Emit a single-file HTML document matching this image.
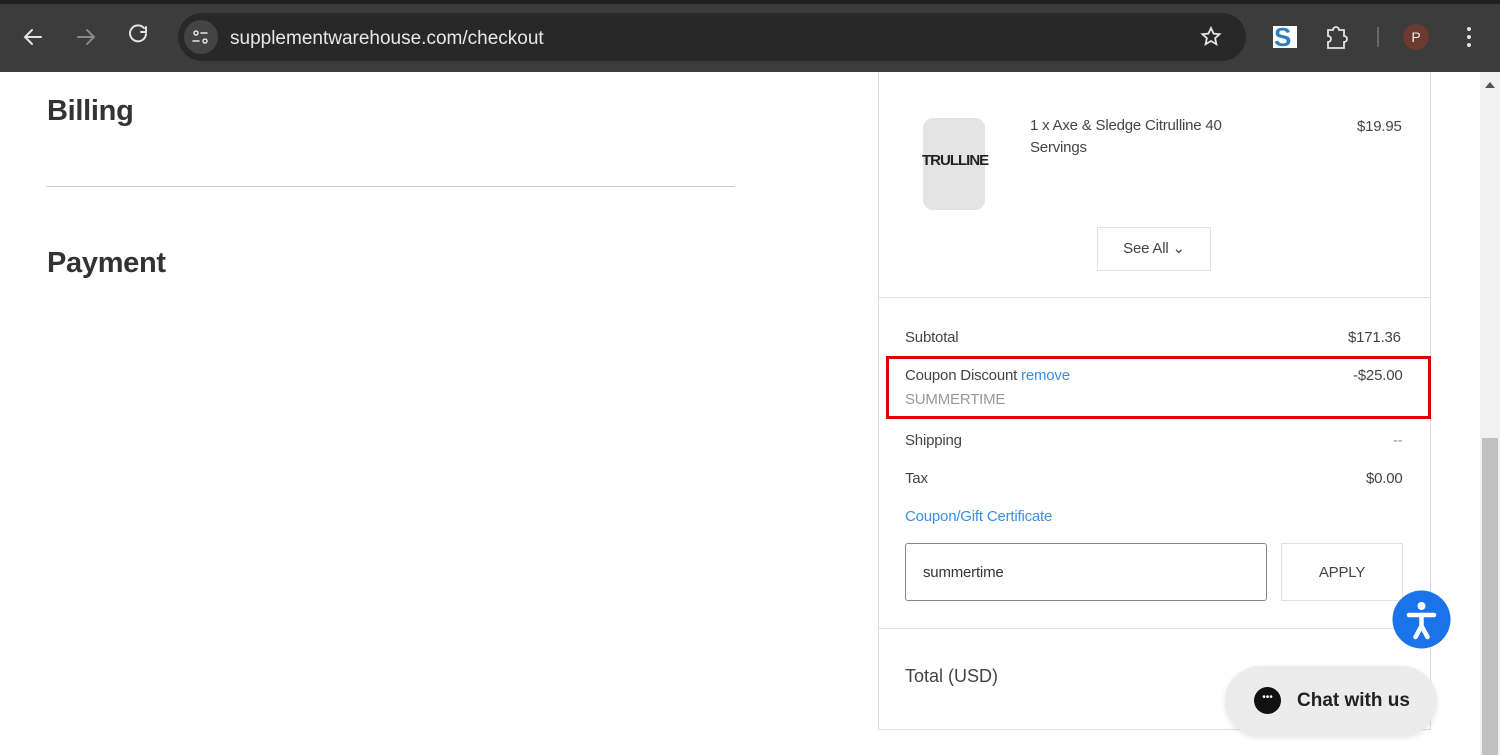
<!DOCTYPE html>
<html><head><style>
*{margin:0;padding:0;box-sizing:border-box}
body{width:1500px;height:755px;overflow:hidden;background:#fff;font-family:"Liberation Sans",sans-serif;position:relative}
.a{position:absolute}
.t{color:#444;font-size:15px;letter-spacing:-0.2px}
</style></head><body>
<div class="a" style="left:0;top:0;width:1500px;height:72px;background:#3c3c3c"></div>
<div class="a" style="left:0;top:0;width:1500px;height:4px;background:#202020"></div>
<div class="a" style="left:178px;top:13px;width:1068px;height:48px;border-radius:24px;background:#282828"></div>
<div class="a" style="left:184px;top:20px;width:34px;height:34px;border-radius:17px;background:#444"></div>
<svg class="a" style="left:0;top:0" width="1500" height="72">
<g stroke="#e3e3e3" stroke-width="2" fill="none" stroke-linecap="round">
<path d="M41 37H25M32 30l-7 7 7 7"/>
<path d="M78 37h16M87 30l7 7-7 7" stroke="#888"/>
<path d="M146 34a8 8 0 1 1-2-6M146 27v5h-5"/>
<path d="M1211 28l2.6 5.6 6 .6-4.5 4 1.3 6-5.4-3.2-5.4 3.2 1.3-6-4.5-4 6-.6z" stroke-width="1.8"/>
<path d="M1328 30h5a3 3 0 0 1 6 0h5v6a3 3 0 0 1 0 6v6h-16v-6a3 3 0 0 0 0-6z" stroke-width="1.8"/>
<circle cx="196" cy="33" r="2" stroke-width="1.5"/><path d="M201 33h6M193 41h6" stroke-width="1.5"/><circle cx="205" cy="41" r="2" stroke-width="1.5"/>
</g>
<rect x="1273" y="26" width="24" height="22" fill="#fff"/>
<text x="1274" y="46" font-family="Liberation Sans" font-weight="bold" font-size="26" fill="#2d7fc1">S</text>
<rect x="1377" y="27" width="2" height="20" fill="#666"/>
<circle cx="1416" cy="37" r="13" fill="#6b3a30"/>
<text x="1416" y="42" text-anchor="middle" font-size="14" fill="#eee" font-family="Liberation Sans">P</text>
<g fill="#e3e3e3"><circle cx="1469" cy="29" r="2"/><circle cx="1469" cy="37" r="2"/><circle cx="1469" cy="45" r="2"/></g>
<text x="230" y="44" font-size="19" fill="#e8e8e8" font-family="Liberation Sans">supplementwarehouse.com/checkout</text>
</svg>

<div class="a" style="left:47px;top:95px;font-size:29px;color:#333;font-weight:bold;letter-spacing:-0.3px">Billing</div>
<div class="a" style="left:46px;top:186px;width:689px;height:1px;background:#ccc"></div>
<div class="a" style="left:47px;top:247px;font-size:29px;color:#333;font-weight:bold;letter-spacing:-0.3px">Payment</div>

<div class="a" style="left:878px;top:72px;width:553px;height:658px;border:1px solid #ddd;border-top:none"></div>
<div class="a" style="left:923px;top:118px;width:62px;height:92px;background:#e4e4e4;border-radius:10px"></div>
<div class="a" style="left:922px;top:152px;font-size:15px;font-weight:bold;color:#222;letter-spacing:-1px">TRULLINE</div>
<div class="a t" style="left:1030px;top:115px;line-height:22px;width:220px">1 x Axe &amp; Sledge Citrulline 40 Servings</div>
<div class="a t" style="left:1357px;top:118px">$19.95</div>
<div class="a t" style="left:1097px;top:227px;width:114px;height:44px;border:1px solid #e2e2e2;text-align:center;line-height:42px">See All ⌄</div>
<div class="a" style="left:878px;top:297px;width:553px;height:1px;background:#ddd"></div>
<div class="a t" style="left:905px;top:329px">Subtotal</div><div class="a t" style="left:1348px;top:329px">$171.36</div>
<div class="a" style="left:886px;top:356px;width:545px;height:63px;border:3px solid #e00000"></div>
<div class="a t" style="left:905px;top:367px">Coupon Discount <span style="color:#3a8ee6">remove</span></div>
<div class="a t" style="left:1353px;top:367px">-$25.00</div>
<div class="a t" style="left:905px;top:391px;color:#999">SUMMERTIME</div>
<div class="a t" style="left:905px;top:432px">Shipping</div><div class="a t" style="left:1393px;top:432px;color:#999">--</div>
<div class="a t" style="left:905px;top:470px">Tax</div><div class="a t" style="left:1366px;top:470px">$0.00</div>
<div class="a t" style="left:905px;top:508px;color:#3a8ee6">Coupon/Gift Certificate</div>
<div class="a t" style="left:905px;top:543px;width:362px;height:58px;border:1px solid #888;border-radius:3px;padding:20px 17px;color:#333">summertime</div>
<div class="a t" style="left:1281px;top:543px;width:122px;height:58px;border:1px solid #e2e2e2;text-align:center;line-height:58px;color:#444">APPLY</div>
<div class="a" style="left:878px;top:628px;width:553px;height:1px;background:#ddd"></div>
<div class="a" style="left:905px;top:666px;font-size:18px;color:#444">Total (USD)</div>

<div class="a" style="left:1480px;top:72px;width:20px;height:683px;background:#f1f1f1"></div>
<div class="a" style="left:1482px;top:438px;width:16px;height:317px;background:#c1c1c1"></div>
<div class="a" style="left:1485px;top:82px;width:0;height:0;border-left:5px solid transparent;border-right:5px solid transparent;border-bottom:6px solid #555"></div>

<div class="a" style="left:1225px;top:666px;width:212px;height:70px;border-radius:35px;background:#ececec;box-shadow:0 2px 6px rgba(0,0,0,.1)"></div>
<div class="a" style="left:1254px;top:687px;width:27px;height:27px;border-radius:50%;background:#111;color:#fff;font-size:10px;text-align:center;line-height:22px">•••</div>
<div class="a" style="left:1297px;top:690px;font-size:19px;font-weight:bold;color:#222">Chat with us</div>
<svg class="a" style="left:1392px;top:590px" width="59" height="59"><circle cx="29.5" cy="29.5" r="29" fill="#1a73e8"/><g stroke="#fff" stroke-width="4.5" stroke-linecap="round" fill="none"><path d="M17 25h25M29.5 25v11M29.5 36l-6 11M29.5 36l6 11"/></g><circle cx="29.5" cy="16" r="4" fill="#fff"/></svg>
</body></html>
